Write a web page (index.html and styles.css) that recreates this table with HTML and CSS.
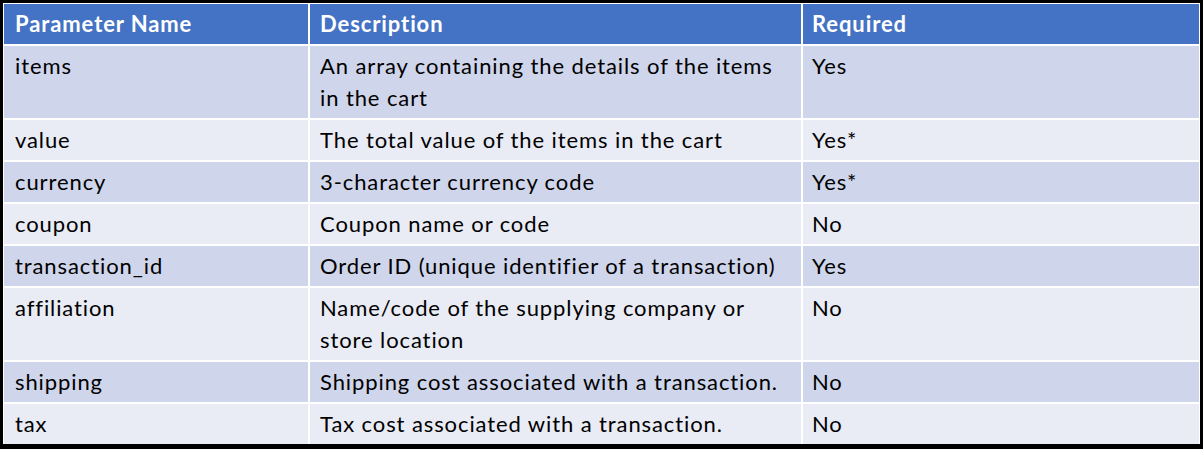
FILE: index.html
```html
<!DOCTYPE html>
<html>
<head>
<meta charset="utf-8">
<link rel="stylesheet" href="styles.css">
</head>
<body>
<div class="frame">
  <div class="inner">
    <table class="params">
      <colgroup>
        <col class="c1">
        <col class="c2">
        <col class="c3">
      </colgroup>
      <thead>
        <tr><th>Parameter Name</th><th>Description</th><th>Required</th></tr>
      </thead>
      <tbody>
        <tr><td>items</td><td>An array containing the details of the items in the cart</td><td>Yes</td></tr>
        <tr><td>value</td><td>The total value of the items in the cart</td><td>Yes*</td></tr>
        <tr><td>currency</td><td>3-character currency code</td><td>Yes*</td></tr>
        <tr><td>coupon</td><td>Coupon name or code</td><td>No</td></tr>
        <tr><td>transaction_id</td><td>Order ID (unique identifier of a transaction)</td><td>Yes</td></tr>
        <tr><td>affiliation</td><td>Name/code of the supplying company or store location</td><td>No</td></tr>
        <tr><td>shipping</td><td>Shipping cost associated with a transaction.</td><td>No</td></tr>
        <tr><td>tax</td><td>Tax cost associated with a transaction.</td><td>No</td></tr>
      </tbody>
    </table>
  </div>
</div>
</body>
</html>
```

FILE: styles.css
```css
html, body {
  margin: 0;
  padding: 0;
  background: #000;
}

.frame {
  width: 1203px;
  height: 449px;
  box-sizing: border-box;
  background: #000;
  padding: 3px 3px 5px 3px;
}

.inner {
  background: #fff;
  padding: 1px;
  height: 100%;
  box-sizing: border-box;
}

.params {
  width: 1195px;
  border-collapse: separate;
  border-spacing: 0;
  table-layout: fixed;
  font-family: "Lato", "Liberation Sans", sans-serif;
  font-size: 22px;
  line-height: 32px;
  letter-spacing: 0.9px;
  font-variant-ligatures: none;
  color: #000;
}

.c1 { width: 306px; }
.c2 { width: 493px; }
.c3 { width: 396px; }

.params th,
.params td {
  text-align: left;
  vertical-align: top;
  padding: 4px 10px 4px 10px;
  border-right: 2px solid #fff;
  border-bottom: 2px solid #fff;
}

.params th:first-child,
.params td:first-child {
  padding-left: 11px;
}

.params th:last-child,
.params td:last-child {
  border-right: none;
  padding-left: 9px;
}

.params tbody tr:last-child td {
  border-bottom: none;
}

.params th {
  background: #4472c4;
  color: #fff;
  font-weight: bold;
}

.params tbody tr:nth-child(odd) td {
  background: #cfd5ea;
}

.params tbody tr:nth-child(even) td {
  background: #e9ebf5;
}
```
